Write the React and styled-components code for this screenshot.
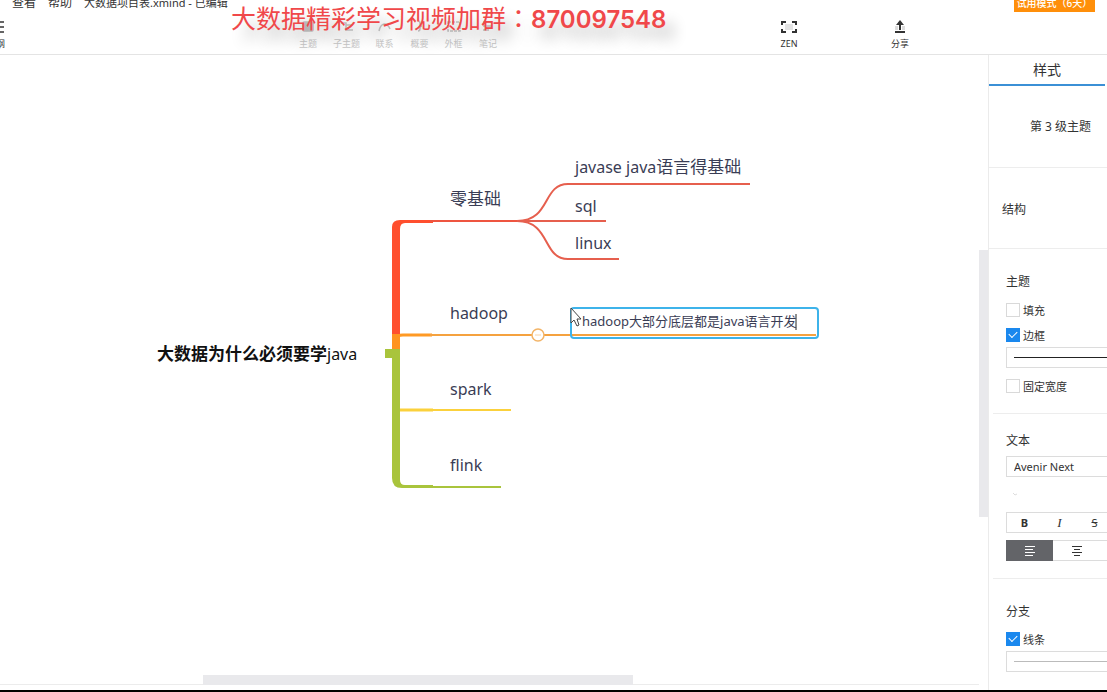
import React from "react";
import styled, { createGlobalStyle, css } from "styled-components";

const GlobalStyle = createGlobalStyle`
  * { box-sizing: border-box; }
  body {
    margin: 0;
    background: #fff;
    color: #333;
    font-family: "Noto Sans", "Noto Sans CJK SC", sans-serif;
    font-size: 12px;
    overflow: hidden;
  }
  button, input, select { font: inherit; color: inherit; margin: 0; }
`;

const Page = styled.div`
  display: flex;
  flex-direction: column;
  height: 100vh;
  border-bottom: 2px solid #000;
  overflow: hidden;
  position: relative;
`;

/* ---------- header ---------- */
const Header = styled.header`
  flex: none;
  display: flex;
  flex-direction: column;
  height: 55px;
  border-bottom: 1px solid #e4e4e4;
  overflow: hidden;
`;

const MenuBar = styled.nav`
  display: flex;
  flex: none;
  align-items: center;
  height: 18px;
  margin-top: -6px;
  padding: 0 12px;
  gap: 12px;
  font-size: 12px;
  line-height: 18px;
`;

const MenuButton = styled.button`
  border: 0;
  padding: 0;
  background: none;
`;

const DocTitle = styled.span`
  flex: 1;
  font-size: 11px;
`;

const Trial = styled.button`
  align-self: flex-end;
  border: 0;
  height: 18px;
  width: 81px;
  padding: 0;
  background: #ff8f0a;
  color: #fff;
  font-size: 10px;
  font-weight: 500;
  line-height: 18px;
`;

const Toolbar = styled.div`
  display: grid;
  grid-template-columns: 289px 216px 1fr 74px 37px 74px 170px;
  align-items: start;
  padding-top: 7px;
`;

const ToolGroup = styled.div`
  display: flex;
`;

const Tool = styled.button`
  display: flex;
  flex: none;
  flex-direction: column;
  align-items: center;
  gap: 2px;
  width: ${(p) => p.$width || 35}px;
  margin: 0;
  padding: 0;
  border: 0;
  background: none;
  color: ${(p) => (p.$faded ? "#c8c8c8" : "#333")};
  font-size: 9px;
  line-height: 14px;
  white-space: nowrap;
  svg { display: block; }
`;

const OutlineTool = styled(Tool)`
  width: 24px;
  margin-left: -16px;
`;

const Banner = styled.div`
  position: absolute;
  left: 231px;
  top: 0;
  color: #f0484a;
  font-size: 25px;
  line-height: 35px;
  white-space: nowrap;
  text-shadow: 9px 12px 14px rgba(0, 0, 0, 0.24);
  pointer-events: none;
  b {
    font-family: Inter, sans-serif;
    font-size: 24px;
    font-weight: 600;
  }
`;

const Colon = styled.span`
  font-family: "Noto Sans CJK TC", sans-serif;
`;

/* ---------- work area ---------- */
const Body = styled.div`
  flex: 1;
  min-height: 0;
  display: flex;
`;

const Work = styled.main`
  flex: 1;
  min-width: 0;
  display: grid;
  grid-template-columns: 1fr 9px;
  grid-template-rows: 1fr 10px;
  padding-bottom: 5px;
`;

const Canvas = styled.div`
  position: relative;
  overflow: hidden;
`;

const Branches = styled.svg`
  position: absolute;
  inset: 0;
  width: 100%;
  height: 100%;
`;

const Topic = styled.div`
  position: absolute;
  left: ${(p) => p.$x}px;
  top: ${(p) => p.$y}px;
  color: #3a3d55;
  font-size: 16px;
  line-height: 24px;
  white-space: nowrap;
`;

const Root = styled(Topic)`
  color: #111;
`;

const Han = styled.span`
  font-size: 17px;
  font-weight: ${(p) => (p.$bold ? 700 : 400)};
`;

const TopicEditor = styled.input`
  position: absolute;
  left: 570px;
  top: 252px;
  width: 249px;
  height: 32px;
  padding: 0 10px 6px;
  border: 2px solid #3db3ea;
  border-radius: 4px;
  background: transparent;
  color: #3a3d55;
  font-size: 13px;
  outline: none;
`;

const Overlay = styled(Branches)`
  pointer-events: none;
`;

const VTrack = styled.div`
  padding-top: 195px;
`;

const VThumb = styled.div`
  height: 267px;
  background: #e9e9ec;
`;

const HTrack = styled.div`
  padding-left: 203px;
  border-bottom: 1px solid #ececec;
`;

const HThumb = styled.div`
  width: 430px;
  height: 10px;
  background: #e9e9ec;
`;

/* ---------- style panel ---------- */
const Panel = styled.aside`
  flex: none;
  width: 119px;
  border-left: 1px solid #ebebeb;
  overflow: hidden;
`;

const Tab = styled.button`
  display: block;
  width: 116px;
  height: 31px;
  padding: 0;
  border: 0;
  border-bottom: 2px solid #3b90d6;
  background: none;
  font-size: 14px;
  line-height: 30px;
`;

const Section = styled.section`
  display: flex;
  flex-direction: column;
  width: 240px;
  padding: ${(p) => p.$pad || "0"};
  height: ${(p) => (p.$height ? p.$height + "px" : "auto")};
  justify-content: ${(p) => (p.$height ? "center" : "flex-start")};
  border-bottom: 1px solid #ededed;
  ${(p) => p.$inset && css`margin-left: 4px;`}
  ${(p) => p.$last && css`border-bottom: 0;`}
`;

const Heading = styled.h2`
  margin: 0;
  font-size: 12px;
  font-weight: 400;
  line-height: 18px;
`;

const CheckLabel = styled.label`
  display: flex;
  align-items: center;
  gap: 3px;
  height: 25px;
  font-size: 11px;
`;

const Check = styled.input`
  appearance: none;
  display: grid;
  place-items: center;
  width: 14px;
  height: 14px;
  border: 1px solid #d9d9d9;
  background: #fff;
  &:checked { border-color: #1a88ee; background: #1a88ee; }
  &:checked::after {
    content: "";
    width: 7px;
    height: 4px;
    margin-bottom: 2px;
    border: solid #fff;
    border-width: 0 0 1px 1px;
    transform: rotate(-45deg);
  }
`;

const SelectBox = styled.div`
  position: relative;
  display: flex;
  ${(p) => p.$line && css`
    &::after {
      content: "";
      position: absolute;
      left: 8px;
      right: 24px;
      top: 10px;
      border-top: 1px solid ${p.$line};
      pointer-events: none;
    }
  `}
`;

const Select = styled.select`
  appearance: none;
  width: 100%;
  height: 21px;
  padding: 0 7px;
  border: 1px solid #dcdcdc;
  border-radius: 0;
  background: #fff;
  font-size: 11px;
`;

const SizeRow = styled.div`
  height: 35px;
  padding: 15px 6px;
  svg { display: block; }
`;

const Segments = styled.div`
  display: flex;
  height: 21px;
  border: 1px solid #dcdcdc;
`;

const Segment = styled.button`
  display: grid;
  place-items: center;
  width: ${(p) => p.$width}px;
  margin: ${(p) => (p.$active ? "-1px 0 -1px -1px" : "0")};
  padding: 0;
  border: 0;
  background: ${(p) => (p.$active ? "#636468" : "none")};
  color: ${(p) => (p.$active ? "#fff" : "#333")};
  font-size: 11px;
  line-height: 18px;
`;

const Gap = styled.div`
  height: ${(p) => p.$size}px;
`;

const Italic = styled.i`
  font-family: "Liberation Serif", serif;
  font-size: 13px;
`;

const tools = [
  ["主题", 38, <rect x="3" y="3" width="10" height="9" rx="1" fill="currentColor" />],
  ["子主题", 39, <path d="M2 4h5v7h7M7 6h7" />],
  ["联系", 37, <path d="M2 12C4 3 10 3 13 10" />],
  ["概要", 33, <path d="M6 2c4 0 0 5 4 5-4 0 0 5-4 5" />],
  ["外框", 35, <rect x="2" y="3" width="12" height="9" strokeDasharray="3 1" />],
  ["笔记", 34, <path d="M3 3h9M3 7h9M3 11h6" />],
];

function Icon({ children, w = 16, h = 16 }) {
  return (
    <svg width={w} height={h} viewBox={`0 0 ${w} ${h}`} fill="none" stroke="currentColor" strokeWidth="1.5">
      {children}
    </svg>
  );
}

function Mark({ label, checked }) {
  return (
    <CheckLabel>
      <Check type="checkbox" defaultChecked={checked} />
      {label}
    </CheckLabel>
  );
}

export default function App() {
  return (
    <Page>
      <GlobalStyle />
      <Header>
        <MenuBar>
          <MenuButton>查看</MenuButton>
          <MenuButton>帮助</MenuButton>
          <DocTitle>大数据项目表.xmind - 已编辑</DocTitle>
          <Trial>试用模式（6天）</Trial>
        </MenuBar>
        <Toolbar>
          <OutlineTool>
            <Icon><path d="M4 3h14M4 8h14M4 13h14" /></Icon>
            大纲
          </OutlineTool>
          <ToolGroup>
            {tools.map(([label, width, art]) => (
              <Tool key={label} $faded $width={width}>
                <Icon>{art}</Icon>
                {label}
              </Tool>
            ))}
          </ToolGroup>
          <span />
          <Tool $width={74}>
            <Icon>
              <rect x="4" y="5" width="8" height="6" fill="#e4e4e4" stroke="none" />
              <path d="M1 6V3h4M11 3h4v3M15 10v3h-4M5 13H1v-3" strokeWidth="2" />
            </Icon>
            ZEN
          </Tool>
          <span />
          <Tool $width={74}>
            <Icon>
              <path d="M3 7h3v4h4V7h3v4H3z" fill="#ddd" stroke="none" />
              <path d="M8 11V3" strokeWidth="2" />
              <path d="M4 6L8 1l4 5z" fill="currentColor" stroke="none" />
              <path d="M3 13h10" strokeWidth="2" />
            </Icon>
            分享
          </Tool>
        </Toolbar>
      </Header>

      <Body>
        <Work>
          <Canvas>
            <Branches fill="none">
              <path d="M400 355H511" stroke="#fbd13c" strokeWidth="2" />
              <path d="M400 355h33" stroke="#fbd13c" strokeWidth="3" />
              <path d="M396 295V284Q396 280 403 280H432" stroke="#ff9a24" strokeWidth="3" />
              <path d="M430 280H816" stroke="#f5a23f" strokeWidth="2" />
              <path d="M392 280V172Q392 165 400 165H433V168H405Q400 168 400 174V280z" fill="#ff4f2e" />
              <path d="M392 279h8v17h-8z" fill="#ff9420" />
              <path d="M430 166H521" stroke="#ee5540" strokeWidth="2" />
              <path d="M517 166C551 166 542 129 568 129H750M517 166H606M517 166C551 166 542 204 568 204H619" stroke="#e65f4e" strokeWidth="2" />
              <path d="M385 294h15v131Q400 430 405 430H433V433H402Q392 433 392 423V303H385z" fill="#a9c43c" />
              <path d="M430 432H501" stroke="#a9c43c" strokeWidth="2" />
              <circle cx="538" cy="280" r="6" fill="#fff" stroke="#f3b467" strokeWidth="1.5" />
              <path d="M535 280h6" stroke="#f8d3a4" />
            </Branches>
            <Root $x={157} $y={287}><Han $bold>大数据为什么必须要学</Han>java</Root>
            <Topic $x={450} $y={132}><Han>零基础</Han></Topic>
            <Topic $x={575} $y={100}>javase java<Han>语言得基础</Han></Topic>
            <Topic $x={575} $y={139}>sql</Topic>
            <Topic $x={575} $y={176}>linux</Topic>
            <Topic $x={450} $y={246}>hadoop</Topic>
            <Topic $x={450} $y={322}>spark</Topic>
            <Topic $x={450} $y={398}>flink</Topic>
            <TopicEditor aria-label="hadoop" defaultValue="hadoop大部分底层都是java语言开发" />
            <Overlay fill="none">
              <path d="M796 259v16" stroke="#222" />
              <path d="M571 253v15l3-3 3 6 2-1-2-6h4z" fill="#fff" stroke="#444" />
            </Overlay>
          </Canvas>
          <VTrack><VThumb /></VTrack>
          <HTrack><HThumb /></HTrack>
        </Work>

        <Panel>
          <Tab>样式</Tab>
          <Section $height={82} $pad="0 0 0 41px"><Heading>第 3 级主题</Heading></Section>
          <Section $height={81} $pad="4px 0 0 13px"><Heading>结构</Heading></Section>
          <Section $inset $pad="24px 0 15px 13px">
            <Heading>主题</Heading>
            <Gap $size={6} />
            <Mark label="填充" />
            <Mark label="边框" checked />
            <SelectBox $line="#222">
              <Select aria-label="边框"><option /></Select>
            </SelectBox>
            <Gap $size={5} />
            <Mark label="固定宽度" />
          </Section>
          <Section $inset $pad="18px 0 17px 13px">
            <Heading>文本</Heading>
            <Gap $size={6} />
            <SelectBox>
              <Select aria-label="文本"><option>Avenir Next</option></Select>
            </SelectBox>
            <SizeRow>
              <svg width="8" height="5" viewBox="0 0 8 5" fill="none" stroke="#ddd"><path d="M1 1l2 2 2-1" /></svg>
            </SizeRow>
            <Segments>
              <Segment $width={35}><b>B</b></Segment>
              <Segment $width={35}><Italic>I</Italic></Segment>
              <Segment $width={35}><s>S</s></Segment>
            </Segments>
            <Gap $size={7} />
            <Segments>
              <Segment $width={47} $active aria-label="left">
                <Icon w={12} h={12}><path d="M1 1.5h10M1 4.5h8M1 7.5h10M1 10.5h8" strokeWidth="1" /></Icon>
              </Segment>
              <Segment $width={47} aria-label="center">
                <Icon w={12} h={12}><path d="M1 1.5h10M3 4.5h6M1 7.5h10M3 10.5h6" strokeWidth="1" /></Icon>
              </Segment>
            </Segments>
          </Section>
          <Section $inset $last $pad="24px 0 0 13px">
            <Heading>分支</Heading>
            <Gap $size={5} />
            <Mark label="线条" checked />
            <SelectBox $line="#bbb">
              <Select aria-label="线条"><option /></Select>
            </SelectBox>
          </Section>
        </Panel>
      </Body>

      <Banner>大数据精彩学习视频加群<Colon lang="zh-TW">：</Colon><b>870097548</b></Banner>
    </Page>
  );
}
